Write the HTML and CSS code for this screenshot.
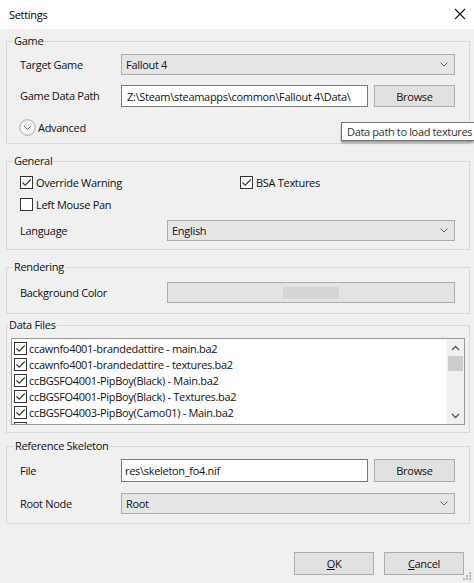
FILE: index.html
```html
<!DOCTYPE html>
<html>
<head>
<meta charset="utf-8">
<link rel="stylesheet" href="styles.css">
</head>
<body>
<div class="window">
  <div class="titlebar">
    <span class="title">Settings</span>
    <svg class="close" width="12" height="12" viewBox="0 0 12 12"><path d="M1 1 L11 11 M11 1 L1 11" stroke="#111" stroke-width="1.1" fill="none"/></svg>
  </div>
  <div class="content">
    <fieldset class="group g-game">
      <legend>Game</legend>
      <div class="body game-body">
        <div class="form-grid">
          <span class="lbl">Target Game</span>
          <div class="combo h21"><span>Fallout 4</span><svg class="chev" width="8" height="5" viewBox="0 0 8 5"><path d="M0.5 0.5 L4 4 L7.5 0.5" stroke="#666" fill="none"/></svg></div>
          <span class="lbl">Game Data Path</span>
          <div class="path-row h22">
            <div class="textbox">Z:\Steam\steamapps\common\Fallout 4\Data\</div>
            <div class="btn browse">Browse</div>
          </div>
        </div>
        <div class="advanced">
          <svg width="17" height="17" viewBox="0 0 17 17"><circle cx="8.5" cy="8.5" r="7.8" stroke="#a8a8a8" fill="#f4f4f4"/><path d="M5 7 L8.5 10.5 L12 7" stroke="#666" fill="none"/></svg>
          <span>Advanced</span>
        </div>
      </div>
    </fieldset>

    <fieldset class="group g-general">
      <legend>General</legend>
      <div class="body general-body">
        <div class="check-row">
          <label class="chk first"><span class="box checked"><svg width="11" height="11" viewBox="0 0 11 11"><path d="M1.5 5.5 L4.2 8.2 L9.8 2.5" stroke="#333" stroke-width="1.1" fill="none"/></svg></span>Override Warning</label>
          <label class="chk"><span class="box checked"><svg width="11" height="11" viewBox="0 0 11 11"><path d="M1.5 5.5 L4.2 8.2 L9.8 2.5" stroke="#333" stroke-width="1.1" fill="none"/></svg></span>BSA Textures</label>
        </div>
        <div class="check-row second">
          <label class="chk"><span class="box"></span>Left Mouse Pan</label>
        </div>
        <div class="wide-grid lang-row">
          <span class="lbl">Language</span>
          <div class="combo h21"><span>English</span><svg class="chev" width="8" height="5" viewBox="0 0 8 5"><path d="M0.5 0.5 L4 4 L7.5 0.5" stroke="#666" fill="none"/></svg></div>
        </div>
      </div>
    </fieldset>

    <fieldset class="group g-render">
      <legend>Rendering</legend>
      <div class="body render-body">
        <div class="wide-grid">
          <span class="lbl">Background Color</span>
          <div class="colorbar"><span class="swatch"></span></div>
        </div>
      </div>
    </fieldset>

    <fieldset class="group g-data">
      <legend>Data Files</legend>
      <div class="body data-body">
        <div class="listbox">
          <div class="items">
            <div class="item"><span class="box checked"><svg width="11" height="11" viewBox="0 0 11 11"><path d="M1.5 5.5 L4.2 8.2 L9.8 2.5" stroke="#333" stroke-width="1.1" fill="none"/></svg></span>ccawnfo4001-brandedattire - main.ba2</div>
            <div class="item"><span class="box checked"><svg width="11" height="11" viewBox="0 0 11 11"><path d="M1.5 5.5 L4.2 8.2 L9.8 2.5" stroke="#333" stroke-width="1.1" fill="none"/></svg></span>ccawnfo4001-brandedattire - textures.ba2</div>
            <div class="item"><span class="box checked"><svg width="11" height="11" viewBox="0 0 11 11"><path d="M1.5 5.5 L4.2 8.2 L9.8 2.5" stroke="#333" stroke-width="1.1" fill="none"/></svg></span>ccBGSFO4001-PipBoy(Black) - Main.ba2</div>
            <div class="item"><span class="box checked"><svg width="11" height="11" viewBox="0 0 11 11"><path d="M1.5 5.5 L4.2 8.2 L9.8 2.5" stroke="#333" stroke-width="1.1" fill="none"/></svg></span>ccBGSFO4001-PipBoy(Black) - Textures.ba2</div>
            <div class="item"><span class="box checked"><svg width="11" height="11" viewBox="0 0 11 11"><path d="M1.5 5.5 L4.2 8.2 L9.8 2.5" stroke="#333" stroke-width="1.1" fill="none"/></svg></span>ccBGSFO4003-PipBoy(Camo01) - Main.ba2</div>
            <div class="item"><span class="box checked"></span></div>
          </div>
          <div class="scrollbar">
            <div class="arrow"><svg width="9" height="6" viewBox="0 0 9 6"><path d="M1 5 L4.5 1.5 L8 5" stroke="#555" stroke-width="1.4" fill="none"/></svg></div>
            <div class="thumb"></div>
            <div class="track"></div>
            <div class="arrow"><svg width="9" height="6" viewBox="0 0 9 6"><path d="M1 1 L4.5 4.5 L8 1" stroke="#555" stroke-width="1.4" fill="none"/></svg></div>
          </div>
        </div>
      </div>
    </fieldset>

    <fieldset class="group g-skel">
      <legend>Reference Skeleton</legend>
      <div class="body skel-body">
        <div class="form-grid skel-grid">
          <span class="lbl">File</span>
          <div class="path-row h23">
            <div class="textbox file">res\skeleton_fo4.nif</div>
            <div class="btn browse">Browse</div>
          </div>
          <span class="lbl">Root Node</span>
          <div class="combo h21"><span>Root</span><svg class="chev" width="8" height="5" viewBox="0 0 8 5"><path d="M0.5 0.5 L4 4 L7.5 0.5" stroke="#666" fill="none"/></svg></div>
        </div>
      </div>
    </fieldset>

    <div class="footer">
      <div class="btn dlg"><span><u>O</u>K</span></div>
      <div class="btn dlg"><span><u>C</u>ancel</span></div>
    </div>
  </div>
  <div class="tooltip"><span class="tip-text">Data path to load textures</span></div>
  <svg class="grip" width="10" height="10" viewBox="0 0 10 10"><g fill="#b8b8b8"><rect x="7" y="1" width="2" height="2"/><rect x="4" y="4" width="2" height="2"/><rect x="7" y="4" width="2" height="2"/><rect x="1" y="7" width="2" height="2"/><rect x="4" y="7" width="2" height="2"/><rect x="7" y="7" width="2" height="2"/></g></svg>
</div>
</body>
</html>
```
FILE: styles.css
```css
* { box-sizing: border-box; }
html, body { margin: 0; padding: 0; }
body {
  width: 474px;
  height: 583px;
  overflow: hidden;
  background: #f0f0f0;
  font-family: "Open Sans", "Noto Sans", "Liberation Sans", sans-serif;
  font-size: 11px;
  letter-spacing: -0.3px;
  color: #111;
}
.window {
  position: relative;
  width: 474px;
  height: 583px;
  background: #f0f0f0;
}
.titlebar {
  height: 29px;
  background: #fff;
  display: flex;
  align-items: center;
  justify-content: space-between;
  padding: 0 8px 0 9px;
}
.title { font-size: 11px; color: #000; }
.close { margin-top: -1px; }
.content {
  padding: 4px 4px 0 6px;
}
.group {
  margin: 0;
  padding: 0;
  border: 1px solid #d9d9d9;
  min-width: 0;
}
.group legend {
  margin-left: 6px;
  padding: 0 1px;
  line-height: 16px;
  font-size: 11px;
}
.lbl { line-height: 16px; }

.form-grid {
  display: grid;
  grid-template-columns: 101px 1fr;
  row-gap: 10px;
  align-items: center;
}
.wide-grid {
  display: grid;
  grid-template-columns: 147px 1fr;
  align-items: center;
}
.h21 { height: 21px; }
.h22 { height: 22px; }
.h23 { height: 23px; }

.combo {
  background: #e5e5e5;
  border: 1px solid #adadad;
  display: flex;
  align-items: center;
  justify-content: space-between;
  padding: 0 6px 0 4px;
}
.path-row {
  display: flex;
  gap: 6px;
}
.textbox {
  flex: 1;
  background: #fff;
  border: 1px solid #7a7a7a;
  display: flex;
  align-items: center;
  padding-left: 5px;
  white-space: nowrap;
  overflow: hidden;
}
.textbox.file { padding-left: 3px; }
.btn {
  background: #e1e1e1;
  border: 1px solid #adadad;
  display: flex;
  align-items: center;
  justify-content: center;
}
.browse { width: 81px; }

.game-body { padding: 5px 14px 7px 13px; }
.advanced {
  margin-top: 12px;
  height: 17px;
  display: flex;
  align-items: center;
  gap: 2px;
  margin-left: -1px;
}

.g-general { margin-top: 9px; }
.general-body { padding: 5px 14px 8px 13px; }
.check-row { display: flex; height: 16px; align-items: center; }
.check-row.second { margin-top: 6px; }
.lang-row { margin-top: 8px; }
.chk { display: flex; align-items: center; }
.chk.first { width: 220px; }
.box {
  width: 13px;
  height: 13px;
  border: 1px solid #333;
  background: #fff;
  display: inline-flex;
  align-items: center;
  justify-content: center;
  margin-right: 3px;
  flex: none;
}

.g-render { margin-top: 9px; }
.render-body { padding: 7px 14px 10px 13px; }
.colorbar {
  height: 21px;
  background: #e3e3e3;
  border: 1px solid #adadad;
  display: flex;
  align-items: center;
  justify-content: center;
}
.swatch {
  width: 56px;
  height: 12px;
  background: #d6d6d6;
}

.g-data { margin-top: 3px; }
.g-data legend { margin-left: 1px; }
.data-body { padding: 5px 4px 7px 4px; }
.listbox {
  height: 87px;
  background: #fff;
  border: 1px solid #999;
  display: flex;
  overflow: hidden;
}
.items {
  flex: 1;
  padding: 1px 0 0 2px;
  overflow: hidden;
}
.item {
  height: 16px;
  display: flex;
  align-items: center;
  white-space: nowrap;
  font-size: 11px;
}
.item .box { margin-right: 2px; }
.scrollbar {
  width: 17px;
  background: #f0f0f0;
  display: flex;
  flex-direction: column;
}
.arrow {
  height: 17px;
  display: flex;
  align-items: center;
  justify-content: center;
}
.thumb {
  height: 15px;
  margin: 0 1px;
  background: #cdcdcd;
}
.track { flex: 1; }

.g-skel { margin-top: 5px; }
.g-skel legend { margin-left: 7px; }
.skel-body { padding: 5px 14px 9px 13px; }
.skel-grid { row-gap: 11px; }

.footer {
  margin-top: 28px;
  display: flex;
  justify-content: flex-end;
  gap: 10px;
  padding-right: 6px;
}
.dlg {
  width: 80px;
  height: 23px;
}

.tooltip {
  position: absolute;
  left: 341px;
  top: 122px;
  width: 133px;
  height: 19px;
  background: #fff;
  border: 1px solid #767676;
  border-right: none;
  box-shadow: 0 2px 2px rgba(0,0,0,0.35);
  padding-left: 5px;
  display: flex;
  align-items: center;
  white-space: nowrap;
  font-size: 11px;
  color: #333;
}
.tip-text { letter-spacing: -0.35px; }
.grip {
  position: absolute;
  right: 2px;
  bottom: 2px;
}
```
